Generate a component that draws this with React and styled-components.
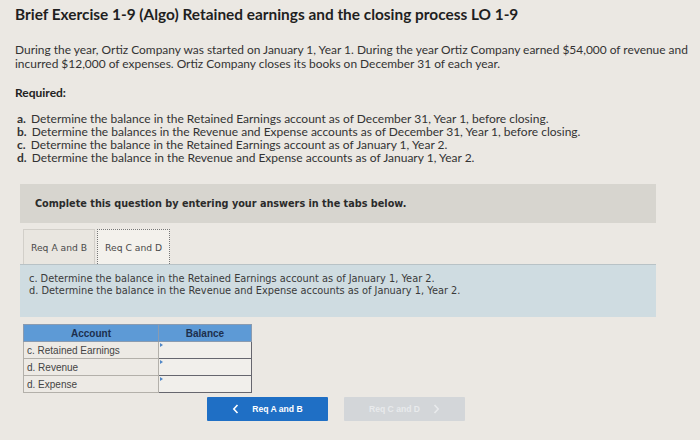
import React from "react";
import styled, { createGlobalStyle } from "styled-components";

const Global = createGlobalStyle`
  html, body {
    margin: 0;
    padding: 0;
    background: #ebe8e3;
  }
  * { box-sizing: border-box; }
`;

const Page = styled.div`
  width: 700px;
  height: 440px;
  overflow: hidden;
  padding: 5px 0 0 15px;
  font-family: Lato, "Open Sans", sans-serif;
  color: #2a2a2a;
`;

const Title = styled.h1`
  margin: 0;
  font-size: 15.4px;
  font-weight: 700;
  line-height: 19px;
  color: #1f1f1f;
`;

const Para = styled.p`
  margin: 19px 0 0;
  font-size: 11.95px;
  line-height: 14px;
  color: #333;
`;

const Required = styled.div`
  margin-top: 14px;
  font-size: 12px;
  font-weight: 700;
  color: #222;
`;

const List = styled.ul`
  list-style: none;
  margin: 12px 0 0;
  padding: 0 0 0 2px;
  font-size: 12px;
  line-height: 13px;
  color: #333;
`;

const Letter = styled.b`
  font-weight: 700;
  margin-right: 5px;
`;

const Panel = styled.div`
  margin: 20px 0 0 5px;
  width: 636px;
`;

const Notice = styled.div`
  height: 39px;
  background: #d7d5cf;
  display: flex;
  align-items: center;
  padding-left: 15px;
  font-family: "DejaVu Sans", Verdana, sans-serif;
  font-weight: 700;
  font-size: 9.7px;
  color: #2b2b2b;
`;

const Tabs = styled.div`
  display: flex;
  gap: 2px;
  margin-top: 6px;
  padding-left: 3px;
`;

const Tab = styled.div`
  height: 35px;
  display: flex;
  align-items: center;
  padding: 0 7px;
  font-family: "DejaVu Sans", Verdana, sans-serif;
  font-size: 9.2px;
  color: #4a4a4a;
  background: ${(p) => (p.$active ? "#f3f1ec" : "#e9e6e0")};
  border: ${(p) => (p.$active ? "1px dotted #777" : "1px solid #d2cfc9")};
  border-bottom: none;
`;

const Info = styled.div`
  height: 53px;
  background: #cfdce1;
  border-top: 1px solid #b8c2c6;
  padding: 8px 0 0 9px;
  font-family: "DejaVu Sans", Verdana, sans-serif;
  font-size: 9.8px;
  line-height: 12px;
  color: #3a3a3a;
`;

const Table = styled.table`
  margin: 7px 0 0 3px;
  border-collapse: collapse;
  font-family: "Liberation Sans", Arial, sans-serif;
  font-size: 10px;
`;

const Th = styled.th`
  background: #5d9ad6;
  color: #1c2f4d;
  font-weight: 700;
  height: 17px;
  padding: 0;
  border: 1px solid #8a9bb0;
  width: ${(p) => p.$w}px;
`;

const Td = styled.td`
  height: 17px;
  padding: 0 0 0 3px;
  border: 1px solid #b3b0aa;
  color: #444;
  background: #edeae5;
`;

const InputCell = styled.td`
  position: relative;
  height: 17px;
  padding: 0;
  border: 1.5px solid #66666e;
  background: #f1efeb;
  &::before {
    content: "";
    position: absolute;
    left: 1px;
    top: 1px;
    border-left: 3px solid #4f86c6;
    border-top: 2px solid transparent;
    border-bottom: 2px solid transparent;
  }
`;

const Nav = styled.div`
  display: flex;
  gap: 16px;
  margin: 4px 0 0 187px;
`;

const NavButton = styled.div`
  width: 121px;
  height: 24px;
  display: flex;
  align-items: center;
  justify-content: center;
  gap: 13px;
  font-family: "Liberation Sans", Arial, sans-serif;
  font-weight: 700;
  font-size: 8.6px;
  color: ${(p) => (p.$disabled ? "#e8eaec" : "#ffffff")};
  background: ${(p) => (p.$disabled ? "#d3d6d9" : "#1f6fc5")};
  border-radius: 1px;
`;

const Chevron = ({ dir }) => (
  <svg width="7" height="10" viewBox="0 0 7 10">
    <path
      d={dir === "left" ? "M5.5 1 L1.8 5 L5.5 9" : "M1.5 1 L5.2 5 L1.5 9"}
      fill="none"
      stroke="currentColor"
      strokeWidth="1.6"
    />
  </svg>
);

const rows = ["c. Retained Earnings", "d. Revenue", "d. Expense"];

export default function App() {
  return (
    <Page>
      <Global />
      <Title>Brief Exercise 1-9 (Algo) Retained earnings and the closing process LO 1-9</Title>
      <Para>
        During the year, Ortiz Company was started on January 1, Year 1. During the year Ortiz Company earned $54,000 of revenue and
        incurred $12,000 of expenses. Ortiz Company closes its books on December 31 of each year.
      </Para>
      <Required>Required:</Required>
      <List>
        <li><Letter>a.</Letter>Determine the balance in the Retained Earnings account as of December 31, Year 1, before closing.</li>
        <li><Letter>b.</Letter>Determine the balances in the Revenue and Expense accounts as of December 31, Year 1, before closing.</li>
        <li><Letter>c.</Letter>Determine the balance in the Retained Earnings account as of January 1, Year 2.</li>
        <li><Letter>d.</Letter>Determine the balance in the Revenue and Expense accounts as of January 1, Year 2.</li>
      </List>
      <Panel>
        <Notice>Complete this question by entering your answers in the tabs below.</Notice>
        <Tabs>
          <Tab>Req A and B</Tab>
          <Tab $active>Req C and D</Tab>
        </Tabs>
        <Info>
          c. Determine the balance in the Retained Earnings account as of January 1, Year 2.
          <br />
          d. Determine the balance in the Revenue and Expense accounts as of January 1, Year 2.
        </Info>
        <Table>
          <thead>
            <tr>
              <Th $w={135}>Account</Th>
              <Th $w={93}>Balance</Th>
            </tr>
          </thead>
          <tbody>
            {rows.map((r) => (
              <tr key={r}>
                <Td>{r}</Td>
                <InputCell />
              </tr>
            ))}
          </tbody>
        </Table>
        <Nav>
          <NavButton>
            <Chevron dir="left" />
            Req A and B
          </NavButton>
          <NavButton $disabled>
            Req C and D
            <Chevron dir="right" />
          </NavButton>
        </Nav>
      </Panel>
    </Page>
  );
}
